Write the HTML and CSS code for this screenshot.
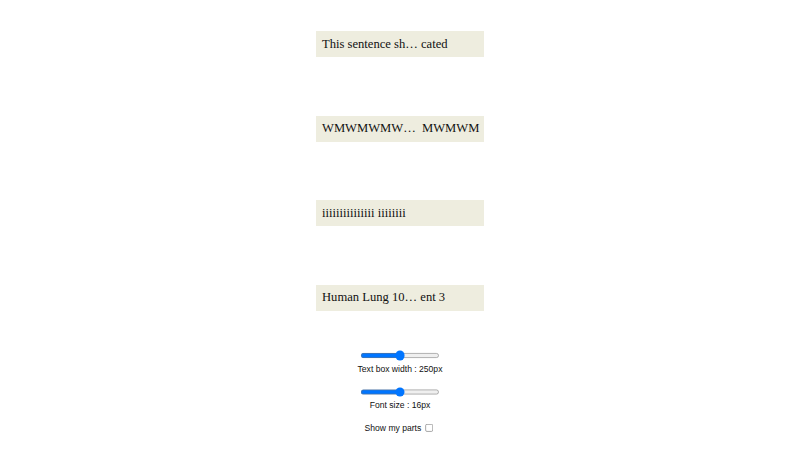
FILE: index.html
```html
<!DOCTYPE html>
<html>
<head>
<meta charset="utf-8">
<link rel="stylesheet" href="styles.css">
</head>
<body>
<div class="stage">
  <div class="box">This sentence sh… cated</div>
  <div class="box">WMWMWMW…&nbsp; MWMWM</div>
  <div class="box">iiiiiiiiiiiiiii iiiiiiii</div>
  <div class="box">Human Lung 10… ent 3</div>
</div>
<div class="controls">
  <div class="control">
    <input type="range" min="0" max="500" value="250">
    <div class="label">Text box width : 250px</div>
  </div>
  <div class="control">
    <input type="range" min="8" max="24" value="16">
    <div class="label">Font size : 16px</div>
  </div>
  <div class="control check">
    <label>Show my parts <input type="checkbox"></label>
  </div>
</div>
</body>
</html>
```
FILE: styles.css
```css
html, body {
  margin: 0;
  background: #ffffff;
}
body {
  font-family: "Liberation Sans", Arial, sans-serif;
  color: #111;
}
.stage {
  display: flex;
  flex-direction: column;
  align-items: center;
  padding-top: 31px;
  gap: 58.5px;
}
.box {
  width: 168px;
  height: 26px;
  box-sizing: border-box;
  padding: 0 6px;
  background: #eeeddf;
  display: flex;
  align-items: center;
  font-family: "Liberation Serif", "Times New Roman", serif;
  font-size: 12.6px;
  white-space: nowrap;
  overflow: hidden;
  color: #111;
}
.controls {
  margin-top: 60px;
  display: flex;
  flex-direction: column;
  align-items: center;
  zoom: 0.645;
  font-size: 13.33px;
}
.control {
  display: flex;
  flex-direction: column;
  align-items: center;
  margin-bottom: 18px;
}
.control input[type="range"] {
  width: 124px;
  margin: 2px 0;
}
.label {
  margin-top: 3px;
}
.check label {
  display: flex;
  align-items: center;
}
.check input {
  margin: 3px 3px 3px 6px;
}
```
